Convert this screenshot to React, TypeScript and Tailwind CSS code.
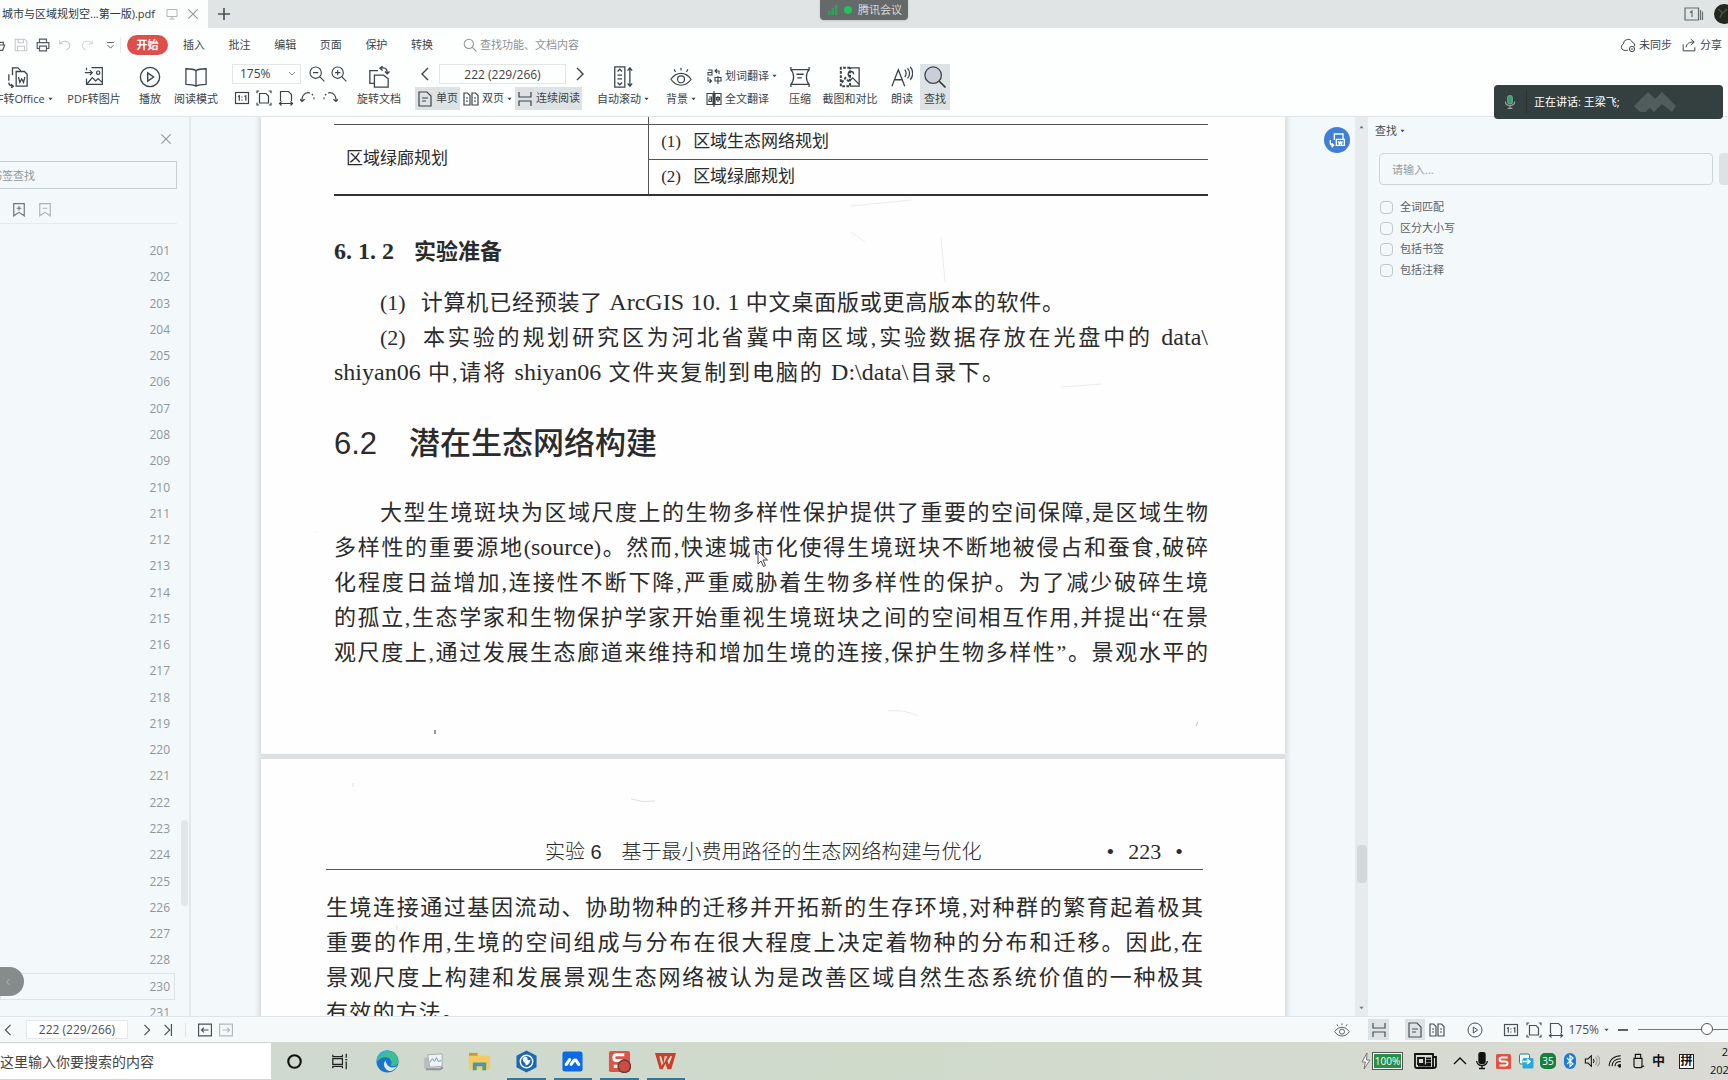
import React from 'react';

type IconProps = { className?: string; children: React.ReactNode; box?: string; width?: number };

function Icon({ className = 'size-4', children, box = '0 0 24 24', width = 1.4 }: IconProps) {
  return (
    <svg className={`shrink-0 ${className}`} viewBox={box} fill="none" stroke="currentColor" strokeWidth={width} aria-hidden="true">
      {children}
    </svg>
  );
}

function Caret() {
  return (
    <svg className="h-1 w-[5px] shrink-0" viewBox="0 0 6 4" fill="currentColor" aria-hidden="true">
      <path d="M0.5 0.5h5L3 3.5z" />
    </svg>
  );
}

const Chevron = ({ right = false, className = 'h-3.5 w-2' }: { right?: boolean; className?: string }) => (
  <Icon className={className} box="0 0 8 14">
    <path d={right ? 'M1 1l6 6-6 6' : 'M7 1L1 7l6 6'} />
  </Icon>
);

const ActualSize = () => (
  <Icon className="size-4" box="0 0 16 16" width={1.2}>
    <rect x="1.5" y="2.5" width="13" height="11" />
    <path d="M4 6.5l1.3-.8v5M10.5 6.5l1.3-.8v5M8 6.5v1M8 9.5v1" />
  </Icon>
);
const FitPage = () => (
  <Icon className="size-4" box="0 0 16 16" width={1.2}>
    <path d="M3.5 3.5h6.500l2.500 2.500v7h-9z M1 3.200V1h2.200M12.800 1H15v2.200M15 12.800V15h-2.200M3.200 15H1v-2.200" />
  </Icon>
);
const FitWidth = () => (
  <Icon className="size-4" box="0 0 16 16" width={1.2}>
    <path d="M2.500 11V1.500h8l3 3V11M1.500 13.500h13M3.500 11.500l-2 2 2 2M12.500 11.500l2 2-2 2" />
  </Icon>
);
const SinglePage = () => (
  <Icon className="size-4" box="0 0 16 16" width={1.2}>
    <path d="M2 1h8l4 4v10H2zM5 7h6M5 10h4" />
  </Icon>
);
const DoublePage = () => (
  <Icon className="size-4" box="0 0 16 16" width={1.2}>
    <path d="M1 2h3.500L7 4.500V14H1zM9 2h3.500L15 4.500V14H9zM3 7h2M3 10h2M11 7h2M11 10h2" />
  </Icon>
);
const Continuous = () => (
  <Icon className="size-4" box="0 0 16 16" width={1.2}>
    <path d="M2 1v5h12V1M2 15v-5h12v5" />
  </Icon>
);
const Play = ({ className = 'size-4' }: { className?: string }) => (
  <Icon className={className} width={1.5}>
    <circle cx="12" cy="12" r="10.500" />
    <path d="M9.500 7.500v9l6.500-4.500z" />
  </Icon>
);
const Eye = ({ className = 'size-5' }: { className?: string }) => (
  <Icon className={className} width={1.300}>
    <path d="M1 14.500C4 10 8 8 12 8s8 2 11 6.500C20 19 16 21 12 21S4 19 1 14.500z" />
    <circle cx="12" cy="14.500" r="3.800" />
    <path d="M12 2v3M4.500 3.500l1.500 3M19.500 3.500l-1.500 3" />
  </Icon>
);

function RibbonButton({ label, caret, className, children }: { label: string; caret?: boolean; className: string; children: React.ReactNode }) {
  return (
    <button className={`flex h-[46px] shrink-0 flex-col items-center justify-between pt-0.5 pb-px whitespace-nowrap ${className}`}>
      {children}
      <span className="flex items-center gap-[3px] leading-5">
        {label}
        {caret && <Caret />}
      </span>
    </button>
  );
}

function TitleBar() {
  return (
    <header className="relative flex h-7 shrink-0 items-center bg-[#e0e4e5]">
      <div className="flex h-full w-[208px] items-center bg-[#fcfefe] pl-0.5">
        <span className="w-[160px] text-[11px] whitespace-nowrap text-[#30363a]">城市与区域规划空...第一版).pdf</span>
        <Icon className="ml-1 size-3 text-[#b0b6b9]">
          <path d="M2 3h20v14H2zM12 17v5M7 22h10" strokeWidth="2" />
        </Icon>
        <button aria-label="关闭标签" className="ml-2 text-[#8d9497]">
          <Icon className="size-3.5"><path d="M4 4l16 16M20 4L4 20" strokeWidth="1.800" /></Icon>
        </button>
      </div>
      <button aria-label="新建标签" className="ml-2 text-[#4c545a]">
        <Icon className="size-4"><path d="M12 3v18M3 12h18" strokeWidth="2.500" /></Icon>
      </button>
      <div className="absolute top-0 left-[820px] flex h-5 w-[88px] items-center gap-1.5 rounded-b-[4px] bg-[#656969] pl-2 text-[11px] text-[#d5d8d8] shadow">
        <svg className="h-2.5 w-2.5" viewBox="0 0 10 10" fill="#25a656" aria-hidden="true">
          <path d="M0 6h2.500v4H0zM3.500 3H6v7H3.500zM7 0h2.500v10H7z" />
        </svg>
        <span className="size-2 rounded-full bg-[#21c25c]" />
        腾讯会议
      </div>
      <div className="mr-[-6px] ml-auto flex items-center gap-2.5">
        <Icon className="h-4 w-5 text-[#666d70]" box="0 0 20 16" width={1.200}>
          <path d="M1 2h13.500v12H1zM16.500 4v10M18.500 5.500V14M6 6.500L8 5v6" />
        </Icon>
        <svg className="size-5" viewBox="0 0 20 20" aria-hidden="true">
          <circle cx="10" cy="10" r="10" fill="#22271f" />
          <path d="M4 5l5 4 4-4M8 9l-2 5" stroke="#4a523f" fill="none" strokeWidth="1.500" />
        </svg>
      </div>
    </header>
  );
}

function MenuBar() {
  return (
    <nav className="flex h-[34px] shrink-0 items-center text-[11px] text-[#3c4348]">
      <div className="flex w-[121px] items-center gap-2 border-r border-[#e8ebec] text-[#545b60]">
        <Icon className="-ml-2.5 size-4"><path d="M2 20V5h7l2 3h9v4M2 20h17l3-8H6z" strokeWidth="1.800" /></Icon>
        <Icon className="size-3.5 text-[#c3c8cb]"><path d="M2 2h16l4 4v16H2zM7 2v6h9V2M6 22v-8h12v8" strokeWidth="1.800" /></Icon>
        <Icon className="size-3.5"><path d="M6 8V2h12v6M6 18H2V8h20v10h-4M6 14h12v8H6z" strokeWidth="2" /></Icon>
        <Icon className="size-3.5 text-[#c3c8cb]"><path d="M3 4v6h6M3 10c4-6 14-6 17 1 1 4-2 8-6 9" strokeWidth="1.800" /></Icon>
        <Icon className="size-3.5 text-[#d3d7d9]"><path d="M21 4v6h-6M21 10C17 4 7 4 4 11c-1 4 2 8 6 9" strokeWidth="1.800" /></Icon>
        <Icon className="ml-1 size-[9px]"><path d="M3 4h18M4 11l8 8 8-8" strokeWidth="2.500" /></Icon>
      </div>
      <button className="ml-1.5 h-5 w-[41px] rounded-full bg-[#df4f4a] font-bold text-white">开始</button>
      <div className="ml-[15px] flex w-[250px] justify-between">
        {['插入', '批注', '编辑', '页面', '保护', '转换'].map((t) => (
          <button key={t} className="whitespace-nowrap">{t}</button>
        ))}
      </div>
      <label className="ml-[30px] flex items-center gap-[3px] text-[#8b9297]">
        <Icon className="size-3.5"><circle cx="10" cy="10" r="8" strokeWidth="1.800" /><path d="M16 16l7 7" strokeWidth="1.800" /></Icon>
        <input aria-label="查找功能、文档内容" placeholder="查找功能、文档内容" className="w-32 bg-transparent placeholder:text-[#8b9297] outline-none" />
      </label>
      <div className="mr-1.5 ml-auto flex items-center gap-2.5">
        <button className="flex items-center gap-[3px]">
          <Icon className="size-4"><path d="M12 20H6a5 5 0 0 1-1-9.500A7 7 0 0 1 18.500 8a5 5 0 0 1 3.500 6" /><circle cx="18" cy="18" r="4" /><path d="M16 18h4" /></Icon>
          未同步
        </button>
        <button className="flex items-center gap-1">
          <Icon className="size-3.5"><path d="M2 11v11h20v-6M7 16c1-7 6-9 13-9M15 2l6 5-6 5" strokeWidth="1.700" /></Icon>
          分享
        </button>
      </div>
    </nav>
  );
}

function Ribbon() {
  return (
    <div className="flex h-[55px] shrink-0 items-start border-b border-[#e0e4e5] pt-0.5 text-[11px] text-[#3c4348]">
      <RibbonButton label="PDF转Office" caret className="-ml-5 w-[76px]">
        <Icon className="size-[22px]"><path d="M10 6h9l3 3v13H10zM6 10V2h6l3 3M2 9v7M2 18c0 3 2 4 5 4M4.500 20L7 22l-2.500 2M12.500 12l1.500 6 2-4 2 4 1.500-6" /></Icon>
      </RibbonButton>
      <RibbonButton label="PDF转图片" className="w-[76px]">
        <Icon className="size-5"><path d="M9 2h13v20H3v-7M3 5V2M1 8h9M7 5l3 3-3 3M4 21l6-7 4 4 3-3 5 5" /><circle cx="17" cy="8" r="2" /></Icon>
      </RibbonButton>
      <RibbonButton label="播放" className="w-9"><Play className="size-[22px]" /></RibbonButton>
      <RibbonButton label="阅读模式" className="w-14">
        <Icon className="size-[22px]"><path d="M12 5v17M12 5C9 3 5 3 1 3v17c4 0 8 0 11 2 3-2 7-2 11-2V3c-4 0-8 0-11 2z" /></Icon>
      </RibbonButton>
      <div className="flex h-[46px] w-[126px] shrink-0 flex-col justify-between pl-2">
        <div className="flex items-center gap-2">
          <div className="relative flex h-5 w-[69px] items-center border border-[#e2e6e7]">
            <select aria-label="缩放比例" defaultValue="175%" className="h-full w-full appearance-none bg-transparent pl-[7px] text-[12px]">
              <option>175%</option>
            </select>
            <svg className="pointer-events-none absolute right-1 h-1.5 w-2" viewBox="0 0 8 6" fill="none" stroke="#888" aria-hidden="true"><path d="M1 1l3 3 3-3" /></svg>
          </div>
          <button aria-label="缩小"><Icon className="size-4"><circle cx="10" cy="10" r="8.500" strokeWidth="1.700" /><path d="M16 16l7 7M6 10h8" strokeWidth="1.700" /></Icon></button>
          <button aria-label="放大" className="-ml-0.5"><Icon className="size-4"><circle cx="10" cy="10" r="8.500" strokeWidth="1.700" /><path d="M16 16l7 7M6 10h8M10 6v8" strokeWidth="1.700" /></Icon></button>
        </div>
        <div className="flex h-6 items-center gap-1.5 pl-0.5">
          <button aria-label="实际大小"><ActualSize /></button>
          <button aria-label="适合页面"><FitPage /></button>
          <button aria-label="适合宽度"><FitWidth /></button>
          <button aria-label="向左旋转"><Icon className="size-4"><path d="M3 17C2 9 7 4 12 4M-1 13l4 4 4-3" strokeWidth="1.800" /><path d="M12 4c6 0 10 5 9 13" strokeDasharray="3 3" strokeWidth="1.800" /></Icon></button>
          <button aria-label="向右旋转"><Icon className="size-4"><path d="M21 17c1-8-4-13-9-13M25 13l-4 4-4-3" strokeWidth="1.800" /><path d="M12 4C6 4 2 9 3 17" strokeDasharray="3 3" strokeWidth="1.800" /></Icon></button>
        </div>
      </div>
      <RibbonButton label="旋转文档" className="w-[58px]">
        <Icon className="size-[22px]"><path d="M7 10h10l5 4v9H7zM7 19H2V5h9M14 2h3c3 0 4 2 4 6M16 0l-3 2.500L16 5M18.500 6L21 8.500 23.500 6" /></Icon>
      </RibbonButton>
      <div className="flex h-[46px] w-[186px] shrink-0 flex-col justify-between pl-[7px]">
        <div className="flex items-center pl-1.5">
          <button aria-label="上一页"><Chevron /></button>
          <input aria-label="页码" defaultValue="222 (229/266)" className="mr-2.5 ml-2.5 h-5 w-[127px] border border-[#e2e6e7] text-center text-[12px]" />
          <button aria-label="下一页"><Chevron right /></button>
        </div>
        <div className="flex h-[23px] items-center gap-[3px] whitespace-nowrap">
          <button className="flex h-full items-center gap-[3px] bg-[#dde3e5] px-0.5"><SinglePage />单页</button>
          <button className="flex h-full items-center gap-[3px]"><DoublePage />双页<Caret /></button>
          <button className="flex h-full items-center gap-[3px] bg-[#dde3e5] px-0.5"><Continuous />连续阅读</button>
        </div>
      </div>
      <RibbonButton label="自动滚动" caret className="w-[58px]">
        <Icon className="size-[22px]"><path d="M3 1h11v22H3zM6 6l2.500-2.500L11 6M6 18l2.500 2.500L11 18M6 10h5M6 14h5M19.500 2v20M17 5l2.500-3L22 5M17 19l2.500 3 2.500-3" /></Icon>
      </RibbonButton>
      <RibbonButton label="背景" caret className="ml-1.5 w-[46px]"><Eye className="size-[22px]" /></RibbonButton>
      <div className="flex h-[46px] w-20 shrink-0 flex-col justify-between pl-0.5 whitespace-nowrap">
        <button className="flex h-6 items-center gap-[3px]">
          <Icon className="size-4" box="0 0 16 16" width={1.100}><path d="M2 2h4v5H2V4.500h4M9 3h4v3M11 1L9 3l2 2M2 9v4h3M3.500 11L5.500 13l-2 2M9 9.500h6v3.500H9zM12 8v8" /></Icon>
          划词翻译<Caret />
        </button>
        <button className="flex h-[22px] items-center gap-[3px]">
          <Icon className="size-4" box="0 0 16 16" width={1.100}><path d="M1 2.500h6v11H1zM9 2.500h6v11H9zM8 0v16M3 6h2.500v4.500H3V8h2.500M10.500 6.500h3v2.500h-3zM12 5v6" /></Icon>
          全文翻译
        </button>
      </div>
      <RibbonButton label="压缩" className="w-8">
        <Icon className="size-[22px]"><path d="M2 1v3h20V1M2 23v-3h20v3M2 4c4 4 4 12 0 16M22 4c-4 4-4 12 0 16M8 9h8M9 13h5" /></Icon>
      </RibbonButton>
      <RibbonButton label="截图和对比" className="w-[68px]">
        <Icon className="size-[22px]"><path d="M12 2h10v20H12M12 16l3-3 7 7M16 9a3 3 0 1 0-3 3" /><path d="M12 2H2v20h10V2M3 18l4-5 5 5" strokeDasharray="3 1.500" strokeWidth="2.200" /></Icon>
      </RibbonButton>
      <RibbonButton label="朗读" className="w-9">
        <Icon className="size-[22px]"><path d="M1 22L8 4l7 18M4 15h8M15 4c2 2 2 6 0 8M18 2.500c3 3 3 8 0 11M21 1c3.500 4 3.500 10 0 14" /></Icon>
      </RibbonButton>
      <RibbonButton label="查找" className="w-[30px] bg-[#dde3e5]">
        <Icon className="size-[22px]"><circle cx="10" cy="10" r="9" fill="#c9ced8" /><path d="M16.500 16.500l7 7" strokeWidth="1.800" /></Icon>
      </RibbonButton>
    </div>
  );
}

const outlinePages = [...Array.from({ length: 28 }, (_, i) => 201 + i), 230, 231];

function Sidebar() {
  return (
    <aside className="relative flex w-[191px] shrink-0 flex-col overflow-hidden border-r-2 border-[#e3e8e9] bg-[#f3f9fa] text-[#8f9699]">
      <button aria-label="关闭" className="mt-[15px] mr-4 self-end">
        <Icon className="size-3.5"><path d="M4 4l16 16M20 4L4 20" strokeWidth="1.800" /></Icon>
      </button>
      <input aria-label="书签查找" placeholder="书签查找" className="mt-[15px] mr-3 -ml-3 h-7 shrink-0 border border-[#c8cfd1] pl-0.5 text-[11px] outline-none placeholder:text-[#8f9699]" />
      <div className="mr-3 flex h-[35px] shrink-0 items-center gap-3 border-b border-[#e6ecee] pt-2">
        <span className="-ml-px h-3 w-px bg-[#9aa1a4]" />
        <Icon className="size-3.5 text-[#6f7679]"><path d="M3 1h18v21l-9-6-9 6zM12 5v8M8 9h8" strokeWidth="2" /></Icon>
        <Icon className="size-3.5 text-[#adb3b6]"><path d="M3 1h18v21l-9-6-9 6zM8 9h8" strokeWidth="2" /></Icon>
      </div>
      <ol className="mt-3.5 mr-3.5 flex h-[788px] shrink-0 flex-col text-[12px]">
        {outlinePages.map((n) => (
          <li key={n} className={`flex flex-1 items-center justify-end border pr-1 ${n === 230 ? 'border-[#dde3e5]' : 'border-transparent'}`}>
            {n}
          </li>
        ))}
      </ol>
      <div className="absolute right-px bottom-[110px] h-[86px] w-[7px] rounded bg-[#e1e6e7]" />
      <button aria-label="收起" className="absolute bottom-5 left-0 flex h-[29px] w-6 items-center justify-center rounded-r-full bg-[#868b8b] pr-2 text-[#c4c8c8]">
        <Chevron className="h-2 w-1" />
      </button>
    </aside>
  );
}

const En = ({ children }: { children: React.ReactNode }) => <span className="text-[24px]">{children}</span>;

function Line({ children, className = '' }: { children: React.ReactNode; className?: string }) {
  return <span className={`block h-[35px] whitespace-nowrap [text-align-last:justify] ${className}`}>{children}</span>;
}

const SERIF = "font-['Liberation_Serif','Noto_Sans_CJK_SC',serif]";

function DocumentView() {
  return (
    <main className={`relative min-w-0 flex-1 overflow-hidden bg-[#f3f8fa] text-[22px] leading-[35px] text-[#2b2b2b] ${SERIF}`}>
      <article className="relative mx-[70px] h-[637px] bg-[#fefefe] pr-[77px] pl-[73px] shadow-[0_0_5px_2px_#d2d6d7]">
        <table className="w-full table-fixed border-collapse border-b-2 border-[#333] text-[17px] leading-[34px]">
          <tbody>
            <tr className="h-[7px] border-b border-[#555]">
              <td className="w-[36%] border-r border-[#555] p-0" />
              <td className="p-0" />
            </tr>
            <tr>
              <td rowSpan={2} className="border-r border-[#555] py-0 pr-0 pl-3">区域绿廊规划</td>
              <td className="border-b border-[#555] py-0 pr-0 pl-3"><span className="inline-block w-8">(1)</span>区域生态网络规划</td>
            </tr>
            <tr>
              <td className="py-0 pr-0 pl-3"><span className="inline-block w-8">(2)</span>区域绿廊规划</td>
            </tr>
          </tbody>
        </table>
        <h3 className="mt-[38px] font-bold"><span className="mr-5 text-[24px]">6. 1. 2</span>实验准备</h3>
        <p className="mt-4">
          <Line className="w-[730px] pl-[46px]"><span className="inline-block w-10 [text-align-last:left]">(1)</span>计算机已经预装了 <En>ArcGIS 10. 1</En> 中文桌面版或更高版本的软件。</Line>
          <Line className="pl-[46px]"><span className="inline-block w-10 [text-align-last:left]">(2)</span>本实验的规划研究区为河北省冀中南区域,实验数据存放在光盘中的 <En>data\</En></Line>
          <Line className="w-[670px]"><En>shiyan06</En> 中,请将 <En>shiyan06</En> 文件夹复制到电脑的 <En>D:\data\</En>目录下。</Line>
        </p>
        <h2 className="mt-[34px] font-['Liberation_Sans','Noto_Sans_CJK_SC',sans-serif] text-[31px] leading-10 font-medium"><span className="mr-8 font-normal">6.2</span>潜在生态网络构建</h2>
        <p className="mt-[31px]">
          <Line className="pl-[46px]">大型生境斑块为区域尺度上的生物多样性保护提供了重要的空间保障,是区域生物</Line>
          <Line>多样性的重要源地(<En>source</En>)。然而,快速城市化使得生境斑块不断地被侵占和蚕食,破碎</Line>
          <Line>化程度日益增加,连接性不断下降,严重威胁着生物多样性的保护。为了减少破碎生境</Line>
          <Line>的孤立,生态学家和生物保护学家开始重视生境斑块之间的空间相互作用,并提出“在景</Line>
          <Line>观尺度上,通过发展生态廊道来维持和增加生境的连接,保护生物多样性”。景观水平的</Line>
        </p>
        <svg className="pointer-events-none absolute inset-0 h-full w-full" fill="none" stroke="#ececec" aria-hidden="true">
          <path d="M590 89l60-6M590 115l14 10M680 120l4 45M627 594q16-2 30 5M800 270l40-3M54 415h2" />
          <path d="M174 613v4" stroke="#999" strokeWidth="2" />
          <path d="M935 609l2-4" stroke="#bbb" />
        </svg>
      </article>
      <article className="relative mx-[70px] mt-[5px] bg-[#fefefe] pt-[78px] pr-[82px] pl-[65px] shadow-[0_0_5px_2px_#d2d6d7]">
        <header className="flex items-center justify-end gap-[125px] border-b border-[#555] pr-5 pb-0.5 leading-[30px]">
          <span className="font-['Liberation_Sans','Noto_Sans_CJK_SC',sans-serif] text-[20px] font-light">实验 6<span className="ml-5">基于最小费用路径的生态网络构建与优化</span></span>
          <span className="flex gap-3.5"><span>•</span><span>223</span><span>•</span></span>
        </header>
        <p className="mt-5">
          <Line>生境连接通过基因流动、协助物种的迁移并开拓新的生存环境,对种群的繁育起着极其</Line>
          <Line>重要的作用,生境的空间组成与分布在很大程度上决定着物种的分布和迁移。因此,在</Line>
          <Line>景观尺度上构建和发展景观生态网络被认为是改善区域自然生态系统价值的一种极其</Line>
          <Line className="w-[138px]">有效的方法。</Line>
        </p>
        <svg className="pointer-events-none absolute inset-0 h-full w-full" fill="none" stroke="#e0e0e0" aria-hidden="true">
          <path d="M370 40q12 4 24 2M92 24v4M136 166v5" />
        </svg>
      </article>
      <svg className="absolute top-[433px] left-[566px] h-[18px] w-3" viewBox="0 0 12 18" fill="#fff" stroke="#444" aria-hidden="true">
        <path d="M1 1v13l3-3 2.500 5.500 2-1L6 10h4.500z" />
      </svg>
      <button aria-label="转换" className="absolute top-2.5 right-[5px] flex size-[26px] items-center justify-center rounded-full bg-[#3f7fd6] text-white">
        <Icon className="size-4" width={2}><path d="M8 12V3h13v8M11 11h12v9H11zM14 14l1.500 4 1.500-3 1.500 3 1.500-4M2 12v5c0 2 1 3 4 3M4 17l3 3-3 3" /></Icon>
      </button>
    </main>
  );
}

function FindPanel() {
  return (
    <aside className="flex w-[373px] shrink-0 bg-[#f3f8fa] text-[11px] text-[#5b6266]">
      <div className="flex w-[13px] flex-col items-center bg-[#e7ebed] pt-2 pb-1.5 text-[#777]">
        <svg className="h-1 w-[5px]" viewBox="0 0 6 4" fill="currentColor" aria-hidden="true"><path d="M0.500 3.500h5L3 0.500z" /></svg>
        <div className="mt-auto mb-[123px] h-[38px] w-2.5 rounded-sm bg-[#d3d8da]" />
        <Caret />
      </div>
      <div className="flex-1 overflow-hidden pl-[7px]">
        <button className="mt-[5px] flex h-[18px] items-center gap-[3px] text-[#454c50]">查找<Caret /></button>
        <div className="mt-[13px] flex w-full pl-1">
          <input aria-label="查找内容" placeholder="请输入..." className="h-8 min-w-0 flex-1 rounded border border-[#cfd5d7] pl-3 outline-none placeholder:text-[#979da0]" />
          <button aria-label="查找下一个" className="ml-1.5 w-[9px] rounded-l bg-[#dfe2e4]" />
        </div>
        <div className="mt-3 flex flex-col pl-[5px]">
          {['全词匹配', '区分大小写', '包括书签', '包括注释'].map((t) => (
            <label key={t} className="flex h-[21px] items-center gap-[7px]">
              <input type="checkbox" className="size-[13px] appearance-none rounded-sm border border-[#c3c9cb]" />
              {t}
            </label>
          ))}
        </div>
      </div>
    </aside>
  );
}

function StatusBar() {
  return (
    <footer className="flex h-[26px] shrink-0 items-center border-t border-[#dfe5e8] bg-[#f5f9fa] text-[12px] text-[#4a5156]">
      <button aria-label="上一页" className="ml-1"><Chevron className="h-3 w-2" /></button>
      <input aria-label="当前页" defaultValue="222 (229/266)" className="ml-3.5 h-[19px] w-[102px] border border-[#e3e8ea] bg-white text-center" />
      <button aria-label="下一页" className="ml-[15px]"><Chevron right className="h-3 w-2" /></button>
      <button aria-label="末页" className="ml-3"><Icon className="h-3 w-2.5" box="0 0 10 14"><path d="M1 1l6 6-6 6M9 0v14" /></Icon></button>
      <span className="ml-3 h-3.5 w-px bg-[#dfe4e6]" />
      <button aria-label="后退" className="ml-3"><Icon className="size-3.5" width={2}><path d="M1 2h22v20H1zM18 12H6M10 8l-4 4 4 4" /></Icon></button>
      <button aria-label="前进" className="ml-[7px] text-[#b3b9bc]"><Icon className="size-3.5" width={2}><path d="M1 2h22v20H1zM6 12h12M14 8l4 4-4 4" /></Icon></button>
      <div className="ml-auto flex h-full items-center">
        <button aria-label="护眼模式"><Eye className="size-4" /></button>
        <button aria-label="连续阅读" className="ml-[18px] flex h-[21px] w-[21px] items-center justify-center bg-[#dde3e5]"><Continuous /></button>
        <button aria-label="单页" className="ml-4 flex h-[21px] w-5 items-center justify-center bg-[#dde3e5]"><SinglePage /></button>
        <button aria-label="双页" className="ml-1"><DoublePage /></button>
        <button aria-label="播放" className="ml-[22px]"><Play /></button>
        <button aria-label="实际大小" className="ml-5"><ActualSize /></button>
        <button aria-label="适合页面" className="ml-[7px]"><FitPage /></button>
        <button aria-label="适合宽度" className="ml-1.5"><FitWidth /></button>
        <button className="ml-1 flex items-center gap-[5px]">175%<Caret /></button>
        <button aria-label="缩小" className="ml-[9px]"><Icon className="h-2 w-2.5" box="0 0 10 8" width={1.800}><path d="M0 4h10" /></Icon></button>
        <input
          aria-label="缩放"
          type="range"
          defaultValue="77"
          className="-mr-1 ml-2.5 h-3 w-[94px] appearance-none bg-transparent [&::-webkit-slider-runnable-track]:h-px [&::-webkit-slider-runnable-track]:bg-[#777] [&::-webkit-slider-thumb]:-mt-[6px] [&::-webkit-slider-thumb]:size-3 [&::-webkit-slider-thumb]:appearance-none [&::-webkit-slider-thumb]:rounded-full [&::-webkit-slider-thumb]:border [&::-webkit-slider-thumb]:border-[#555] [&::-webkit-slider-thumb]:bg-white"
        />
      </div>
    </footer>
  );
}

const taskbarApps: { name: string; active: boolean; art: React.ReactNode }[] = [
  { name: 'Cortana', active: false, art: <circle cx="12" cy="12" r="6.500" fill="none" stroke="#111" strokeWidth="2.200" /> },
  {
    name: '任务视图', active: false,
    art: <path d="M4 5v2h10V5M4 19v-2h10v2M4 9h10v6H4zM18 4v4M18 12v8M17 10h2" fill="none" stroke="#222" strokeWidth="1.300" />,
  },
  {
    name: 'Edge', active: false,
    art: (
      <>
        <circle cx="12" cy="12" r="11.500" fill="#1a74c9" />
        <path d="M1 9C3 2 10-1 16 1.500c6 2 8 8 7 12-1 3-5 4-8 3 3-4 0-9-5-9-4 0-7 2-9 5z" fill="#3bbf93" />
        <path d="M1 9C3 2 10-1 14 1c-4 3-9 4-13 8z" fill="#2fb1d8" />
        <path d="M10 11c-3 3-2 9 4 11 3 0 6-2 8-5-5 3-11 1-12-6z" fill="#dcebf0" />
      </>
    ),
  },
  {
    name: '监视器', active: false,
    art: (
      <>
        <path d="M2 8h5v11H2z" fill="#b9bdbd" />
        <path d="M6 5l15-1v13l-13 1z" fill="#eef3f5" stroke="#a4abad" />
        <path d="M8 13l3-4 2 3 2-4 2 4 3-1" fill="none" stroke="#5c9fc5" />
        <path d="M4 20h15l3-2" stroke="#8d9494" fill="none" strokeWidth="2" />
      </>
    ),
  },
  {
    name: '文件资源管理器', active: false,
    art: (
      <>
        <path d="M1 3h9l2 3h11v14H1z" fill="#f4cb62" />
        <path d="M1 3h9v3H1z" fill="#c99b33" />
        <path d="M5 21v-8h14v8h-4v-4H9v4z" fill="#4b97a5" />
      </>
    ),
  },
  {
    name: '浏览器', active: true,
    art: (
      <>
        <path d="M12 0.500l10.500 5.500v12L12 23.500 1.500 18V6z" fill="#1d69b1" />
        <circle cx="12" cy="12" r="6.500" fill="none" stroke="#fff" strokeWidth="1.500" />
        <path d="M8 9c2-3 5-2 5 0s2 2 3 1c0 4-3 6-5 6 1-3-3-3-3-7z" fill="#fff" />
      </>
    ),
  },
  {
    name: '腾讯会议', active: true,
    art: (
      <>
        <rect x="1.500" y="1.500" width="21" height="21" rx="2.500" fill="#0c6ae8" />
        <path d="M5.500 15L9 10M10.500 15L14 10.500M15.500 10.500L18.500 15" stroke="#fff" strokeWidth="3.200" strokeLinecap="round" fill="none" />
      </>
    ),
  },
  {
    name: 'Snagit', active: true,
    art: (
      <>
        <rect x="1" y="1" width="22" height="22" rx="2" fill="#dc5547" />
        <path d="M17 5H9Q6 5 6 8t3 3h4q3 0 3 3t-3 3H6" stroke="#fff" strokeWidth="3" fill="none" />
        <circle cx="17" cy="17" r="6.500" fill="#cf4a40" stroke="#6b3a3a" strokeWidth="1.500" />
      </>
    ),
  },
  {
    name: 'WPS', active: true,
    art: (
      <>
        <path d="M1 3h22l-5 17h-4l-2-6-3 6H6z" fill="#cf3d27" />
        <path d="M5.500 6.500h2l2 7-1.500 3.500zM11 6.500h3l-4 8zM17 6.500h2l-3.500 9-1.500-4z" fill="#d5dccf" />
      </>
    ),
  },
];

function Taskbar() {
  return (
    <footer className="flex h-[38px] shrink-0 items-center bg-linear-to-r from-[#cfd8d0] via-[#cfdacb] via-50% to-[#dbdad5] text-[#111]">
      <input aria-label="在这里输入你要搜索的内容" placeholder="这里输入你要搜索的内容" className="h-9 w-[271px] bg-white text-[14px] outline-none placeholder:text-[#454545]" />
      <div className="grid h-full w-[418px] grid-cols-9">
        {taskbarApps.map((a) => (
          <button key={a.name} aria-label={a.name} className="relative flex items-center justify-center">
            <svg className="size-[23px]" viewBox="0 0 24 24" aria-hidden="true">{a.art}</svg>
            {a.active && <span className="absolute inset-x-1 bottom-0 h-0.5 bg-[#33789c]" />}
          </button>
        ))}
      </div>
      <div className="ml-auto flex items-center text-[11px]">
        <svg className="h-[18px] w-2.5" viewBox="0 0 10 18" fill="#fff" stroke="#777" aria-hidden="true"><path d="M6 1L1 10h3.500L3 17l6-9H5.500z" /></svg>
        <span className="ml-0.5 flex h-4 w-[29px] items-center justify-center border border-white bg-[#259048] text-[10px] text-white outline outline-[#555]">100%</span>
        <Icon className="ml-3 h-4 w-[23px]" box="0 0 23 16" width={1.800}><path d="M1 1h18v14H3q-2 0-2-2zM19 4h3v9q0 2-3 2M4 5h6v6H4zM12 5.500h5M12 8h5M12 10.500h5M4 12.500h13" /></Icon>
        <Icon className="ml-4 h-2 w-3.5" box="0 0 14 8"><path d="M1 7l6-6 6 6" /></Icon>
        <Icon className="ml-1.5 size-[18px]" width={1.800}><rect x="8" y="1" width="8" height="14" rx="2" fill="currentColor" /><path d="M5 12c0 8 14 8 14 0M12 18v4M8 22h8" /></Icon>
        <svg className="ml-1 size-[17px]" viewBox="0 0 17 17" aria-hidden="true"><rect x="1" y="1" width="15" height="15" rx="1.500" fill="#e35241" /><path d="M12.500 4.500H7Q4.500 4.500 4.500 6.500T7 8.500h3Q12.500 8.500 12.500 10.500T10 12.500H4.500" stroke="#fff" strokeWidth="2" fill="none" /></svg>
        <svg className="ml-1.5 size-4" viewBox="0 0 16 16" aria-hidden="true"><rect x="1.500" y="1" width="10" height="10" rx="1.500" fill="#f5f8f8" stroke="#1c7f99" /><rect x="4.500" y="5" width="11" height="10.500" rx="1.500" fill="#29a9d6" /><path d="M5 8.500h6M9 6l3 2.500L9 11" stroke="#fff" strokeWidth="1.500" fill="none" /></svg>
        <span className="ml-1.5 flex size-4 items-center justify-center rounded-[5px] bg-[#157f3c] text-[10px] text-white">35</span>
        <svg className="ml-2 h-4 w-3" viewBox="0 0 12 16" aria-hidden="true"><rect width="12" height="16" rx="6" fill="#167cd8" /><path d="M3 5l6 6-3 2.500v-11L9 5l-6 6" stroke="#fff" fill="none" strokeWidth="1.200" /></svg>
        <Icon className="ml-2 size-4" width={1.600}><path d="M2 9h4l5-5v16l-5-5H2zM14 9c1.500 2 1.500 4 0 6" /><path d="M17 6c3.500 4 3.500 8 0 12M20 4c5 5 5 11 0 16" stroke="#9a9a9a" /></Icon>
        <Icon className="ml-2 size-3.5" width={1.800}><path d="M2 21C2 10 10 3 22 3M7 21c0-8 6-13 15-13M12 21c0-5 4-8 10-8M17 21c0-2 2-3 5-3" /><circle cx="20" cy="21" r="1.500" fill="currentColor" /></Icon>
        <Icon className="ml-2 size-4" width={1.700}><path d="M8 2h8v6H8zM6 8h12v11q0 3-3 3H9q-3 0-3-3zM18 21l3-2" /></Icon>
        <span className="ml-1.5 text-[13px] font-bold">中</span>
        <span className="ml-3.5 flex size-[15px] items-center justify-center border border-[#222] bg-white text-[12px] leading-none font-bold">拼</span>
        <span className="ml-4 flex w-[18px] flex-col items-end overflow-hidden leading-[18px]"><span>2</span><span className="self-start">202</span></span>
      </div>
    </footer>
  );
}

export default function App() {
  return (
    <div className="relative flex h-screen flex-col overflow-hidden bg-[#fdfefe] font-['Open_Sans','Noto_Sans_CJK_SC',sans-serif]">
      <TitleBar />
      <MenuBar />
      <Ribbon />
      <div className="flex min-h-0 flex-1">
        <Sidebar />
        <DocumentView />
        <FindPanel />
      </div>
      <StatusBar />
      <Taskbar />
      <div className="absolute top-[85px] right-[5px] flex h-[34px] w-[229px] items-center rounded bg-[#343f40] text-[11px] text-white">
        <span className="flex h-6 w-[33px] items-center justify-center border-r border-[#2a3334]">
          <Icon className="size-3.5 text-[#9aa5a3]" width={2}><rect x="8" y="1" width="8" height="14" rx="4" fill="#2fa36b" stroke="#6f9d88" /><path d="M4 11c0 9 16 9 16 0M12 18v5M8 23h8" /></Icon>
        </span>
        <span className="ml-[7px]">正在讲话: 王梁飞;</span>
        <svg className="ml-3.5 h-5 w-[42px]" viewBox="0 0 42 20" aria-hidden="true">
          <path d="M0 14L14 0l8 8-10 12H6zM14 14L28 0l14 14-4 6-10-8-8 8z" fill="#515c5d" />
        </svg>
      </div>
    </div>
  );
}
